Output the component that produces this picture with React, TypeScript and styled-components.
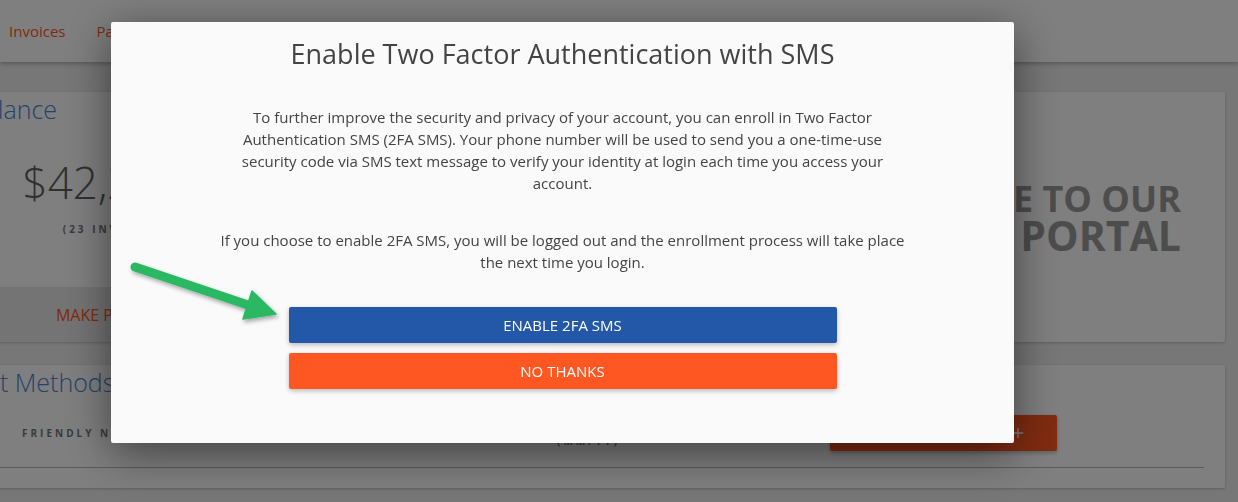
import React from "react";
import styled, { createGlobalStyle } from "styled-components";
import { Plus } from "lucide-react";

const GlobalStyle = createGlobalStyle`
  * { box-sizing: border-box; }
  html, body { margin: 0; padding: 0; }
  body {
    width: 1238px;
    height: 502px;
    overflow: hidden;
    background: #eeeeee;
    font-family: "Open Sans", "Liberation Sans", sans-serif;
  }
`;

const Page = styled.div`
  display: flex;
  flex-direction: column;
`;

const NavBar = styled.nav`
  position: relative;
  z-index: 1;
  height: 62px;
  background: #ffffff;
  box-shadow: 0 2px 4px rgba(0, 0, 0, 0.25);
  display: flex;
  align-items: center;
  gap: 31px;
  padding-left: 9px;
`;

const NavLink = styled.a`
  font-size: 15px;
  color: #ff5722;
  text-decoration: none;
`;

const Content = styled.main`
  margin: 30px 13px 0 -96px;
  display: flex;
  flex-direction: column;
  gap: 23px;
`;

const TopRow = styled.div`
  display: flex;
  gap: 22px;
  height: 250px;
`;

const Card = styled.section`
  background: #ffffff;
  border-radius: 2px;
  box-shadow: 0 1px 3px rgba(0, 0, 0, 0.2);
`;

const BalanceCard = styled(Card)`
  width: 424px;
  display: flex;
  flex-direction: column;
  align-items: center;
`;

const CardTitle = styled.h2`
  align-self: stretch;
  margin: 0;
  padding: 0 6px;
  font-size: 25px;
  font-weight: 300;
  line-height: 34px;
  color: #4a86d2;
`;

const Amount = styled.div`
  margin: 26px 0 0 34px;
  font-size: 44px;
  font-weight: 300;
  line-height: 60px;
  color: #606060;
`;

const SmallCaps = styled.div<{ $top?: number }>`
  margin-top: ${(p) => p.$top ?? 0}px;
  font-size: 10px;
  font-weight: 700;
  letter-spacing: 3px;
  line-height: 14px;
  color: #777777;
  text-transform: uppercase;
`;

const ActionStripe = styled.div`
  margin-top: auto;
  align-self: stretch;
  height: 55px;
  background: #e8e8e8;
  border-radius: 0 0 2px 2px;
  display: flex;
  align-items: center;
  justify-content: center;
  font-size: 16px;
  color: #ff5722;
  text-transform: uppercase;
`;

const WelcomeCard = styled(Card)`
  flex: 1;
  display: flex;
  align-items: center;
  justify-content: flex-end;
  padding-right: 44px;
`;

const WelcomeText = styled.h1`
  margin: 0;
  display: flex;
  flex-direction: column;
  align-items: flex-end;
  font-weight: 700;
  color: #9a9a9a;
`;

const WelcomeLine = styled.span<{ $size: number }>`
  font-size: ${(p) => p.$size}px;
  line-height: 36px;
  white-space: nowrap;
`;

const MethodsCard = styled(Card)`
  padding: 0 21px 20px 0;
`;

const HeaderRow = styled.div`
  display: grid;
  grid-template-columns: 118px 535px 1fr 227px 147px;
  align-items: center;
  height: 69px;
  border-bottom: 1px solid #b8b8b8;
`;

const HeadCell = styled.div`
  font-size: 10px;
  font-weight: 700;
  letter-spacing: 3px;
  line-height: 16px;
  color: #777777;
  text-transform: uppercase;
`;

const AddButton = styled.button`
  height: 36px;
  border: none;
  border-radius: 2px;
  background: #ff5722;
  color: #ffffff;
  font-family: inherit;
  font-size: 14px;
  font-weight: 500;
  text-transform: uppercase;
  white-space: nowrap;
  display: flex;
  align-items: center;
  justify-content: flex-end;
  gap: 8px;
  padding: 0 31px 0 0;
  box-shadow: 0 2px 4px rgba(0, 0, 0, 0.25);
`;

const Overlay = styled.div`
  position: fixed;
  inset: 0;
  z-index: 10;
  background: rgba(0, 0, 0, 0.5);
  padding: 22px 0 0 111px;
`;

const Modal = styled.div`
  width: 903px;
  background: #fafafa;
  border-radius: 2px;
  box-shadow: 0 10px 45px rgba(0, 0, 0, 0.5);
  padding: 14px 0 54px;
  display: flex;
  flex-direction: column;
  align-items: center;
  text-align: center;
  color: #444444;
`;

const ModalTitle = styled.h2`
  margin: 0;
  font-size: 27px;
  font-weight: 400;
  line-height: 36px;
`;

const ModalText = styled.p<{ $top: number }>`
  margin: ${(p) => p.$top}px 0 0;
  max-width: 690px;
  font-size: 15px;
  line-height: 22px;
`;

const ButtonStack = styled.div`
  width: 548px;
  margin-top: 34px;
  display: flex;
  flex-direction: column;
  gap: 10px;
`;

const ModalButton = styled.button<{ $bg: string }>`
  height: 36px;
  border: none;
  border-radius: 2px;
  background: ${(p) => p.$bg};
  color: #ffffff;
  font-family: inherit;
  font-size: 15px;
  font-weight: 500;
  text-transform: uppercase;
  box-shadow: 0 2px 5px rgba(0, 0, 0, 0.26);
`;

const ArrowSvg = styled.svg`
  position: absolute;
  left: 120px;
  top: 250px;
  width: 170px;
  height: 80px;
  overflow: visible;
`;

export default function App() {
  return (
    <>
      <GlobalStyle />
      <Page>
        <NavBar>
          <NavLink>Invoices</NavLink>
          <NavLink>Payments</NavLink>
          <NavLink>Account</NavLink>
        </NavBar>
        <Content>
          <TopRow>
            <BalanceCard>
              <CardTitle>Your Balance</CardTitle>
              <Amount>$42,256.18</Amount>
              <SmallCaps $top={10}>(23 Invoices)</SmallCaps>
              <ActionStripe>Make Payment</ActionStripe>
            </BalanceCard>
            <WelcomeCard>
              <WelcomeText>
                <WelcomeLine $size={36}>WELCOME TO OUR</WelcomeLine>
                <WelcomeLine $size={41}>PAYMENT PORTAL</WelcomeLine>
              </WelcomeText>
            </WelcomeCard>
          </TopRow>
          <MethodsCard>
            <CardTitle>Payment Methods</CardTitle>
            <HeaderRow>
              <span />
              <HeadCell>Friendly Name</HeadCell>
              <HeadCell>
                Expiration
                <br />
                (MM/YY)
              </HeadCell>
              <AddButton>
                Add Payment Method
                <Plus size={16} strokeWidth={2} />
              </AddButton>
              <span />
            </HeaderRow>
          </MethodsCard>
        </Content>
      </Page>
      <Overlay>
        <Modal>
          <ModalTitle>Enable Two Factor Authentication with SMS</ModalTitle>
          <ModalText $top={34}>
            To further improve the security and privacy of your account, you can enroll in Two Factor
            Authentication SMS (2FA SMS). Your phone number will be used to send you a one-time-use
            security code via SMS text message to verify your identity at login each time you access
            your account.
          </ModalText>
          <ModalText $top={35}>
            If you choose to enable 2FA SMS, you will be logged out and the enrollment process will
            take place the next time you login.
          </ModalText>
          <ButtonStack>
            <ModalButton $bg="#2258a7">Enable 2FA SMS</ModalButton>
            <ModalButton $bg="#ff5722">No Thanks</ModalButton>
          </ButtonStack>
        </Modal>
        <ArrowSvg viewBox="0 0 170 80">
          <defs>
            <filter id="arrowShadow" x="-20%" y="-50%" width="140%" height="200%">
              <feDropShadow dx="1.5" dy="2.5" stdDeviation="2" floodColor="#000" floodOpacity="0.35" />
            </filter>
          </defs>
          <g filter="url(#arrowShadow)" fill="#2cb863" stroke="#2cb863">
            <line x1="15" y1="17" x2="128" y2="55" strokeWidth="9" strokeLinecap="round" />
            <polygon points="132,41 123,69 156,64" strokeWidth="1.5" strokeLinejoin="round" />
          </g>
        </ArrowSvg>
      </Overlay>
    </>
  );
}
